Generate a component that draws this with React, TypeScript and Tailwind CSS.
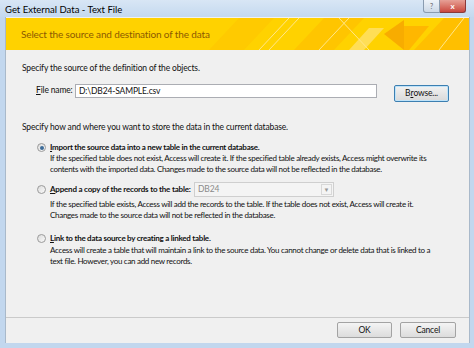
import React from "react";

const font = { fontFamily: 'Lato, "Liberation Sans", sans-serif' };

function Radio({ checked }: { checked?: boolean }) {
  return (
    <span className="inline-flex h-[9px] w-[9px] shrink-0 items-center justify-center rounded-full border border-[#9a9a9a] bg-gradient-to-br from-[#dcdcdc] to-[#fafafa]">
      {checked && <span className="h-[4px] w-[4px] rounded-full bg-[#3d6c99]" />}
    </span>
  );
}

export default function App() {
  return (
    <div className="h-[348px] w-[474px] overflow-hidden bg-[#c2d7ee] text-[8.5px] leading-[11px] tracking-[-0.15px] text-[#111]" style={font}>
      <div className="flex h-[17px] items-start bg-gradient-to-b from-[#d8e6f5] to-[#c4d9ef]">
        <div className="pl-[5px] pt-[4px] text-[9.5px] leading-[11px] tracking-normal text-black">Get External Data - Text File</div>
        <div className="flex-1" />
        <div className="mr-[8px] flex">
          <div className="flex h-[13px] w-[17px] items-center justify-center rounded-bl-[3px] border border-t-0 border-[#8a9cb0] bg-gradient-to-b from-[#eef3f9] to-[#ccd8e6] text-[7px] text-[#666]">?</div>
          <div className="flex h-[13px] w-[26px] items-center justify-center rounded-br-[3px] border border-l-0 border-t-0 border-[#8a3a3a] bg-gradient-to-b from-[#e6a096] to-[#c9463e] text-[8px] font-bold text-white">x</div>
        </div>
      </div>
      <div className="ml-[5px] flex h-[326px] w-[465px] flex-col border-x border-[#a9b9ca] bg-[#f0f0f0]">
        <div className="relative mt-[1px] flex h-[32px] items-center overflow-hidden bg-[#ffd200] pl-[15px]">
          <svg className="absolute right-0 top-0" width="270" height="32" viewBox="0 0 270 32">
            <polygon points="10,32 40,0 75,0 45,32" fill="#ffc600" opacity="0.7" />
            <polygon points="95,32 125,0 165,0 135,32" fill="#ffbd00" opacity="0.6" />
            <polygon points="150,32 170,10 185,10 165,32" fill="#ffe27a" opacity="0.7" />
            <polygon points="185,16 205,2 205,32" fill="#f59b00" opacity="0.7" />
            <polygon points="205,8 230,8 210,32 205,32" fill="#ffab00" opacity="0.7" />
            <polygon points="215,32 245,0 270,0 270,32" fill="#ffb300" opacity="0.6" />
            <line x1="60" y1="32" x2="90" y2="0" stroke="#ffe68a" strokeWidth="1" />
            <line x1="70" y1="32" x2="100" y2="0" stroke="#ffe68a" strokeWidth="1" />
            <line x1="120" y1="32" x2="150" y2="0" stroke="#ffe68a" strokeWidth="1" />
            <line x1="140" y1="0" x2="170" y2="32" stroke="#ffe68a" strokeWidth="1" />
            <line x1="240" y1="32" x2="265" y2="0" stroke="#ffe68a" strokeWidth="1" />
          </svg>
          <span className="relative text-[10px] tracking-[-0.15px] text-[#8c5a00]">Select the source and destination of the data</span>
        </div>
        <div className="flex-1 pl-[16px] pt-[13px]">
          <div className="whitespace-nowrap">Specify the source of the definition of the objects.</div>
          <div className="mt-[10px] flex items-start">
            <span className="ml-[14px] mt-[1px] w-[39px] whitespace-nowrap"><u>F</u>ile name:</span>
            <div className="flex h-[14px] w-[302px] items-center border border-[#abadb3] bg-white pl-[3px]">D:\DB24-SAMPLE.csv</div>
            <div className="ml-[17px] mt-[1px] flex h-[17px] w-[55px] items-center justify-center rounded-[2px] border border-[#3c7fb1] bg-gradient-to-b from-[#f2f2f2] to-[#d9d9d9] shadow-[inset_0_0_0_1px_#bfe3f9]">B<u>r</u>owse...</div>
          </div>
          <div className="mt-[20px] whitespace-nowrap">Specify how and where you want to store the data in the current database.</div>
          <div className="ml-[15px] mt-[9px] whitespace-nowrap">
            <div className="flex items-center">
              <Radio checked />
              <span className="ml-[4px] text-[8px] font-bold tracking-[-0.25px]"><u>I</u>mport the source data into a new table in the current database.</span>
            </div>
            <div className="ml-[13px] text-[8px] tracking-[-0.3px]">
              If the specified table does not exist, Access will create it. If the specified table already exists, Access might overwrite its<br />
              contents with the imported data. Changes made to the source data will not be reflected in the database.
            </div>
            <div className="mt-[7px] flex items-center">
              <Radio />
              <span className="ml-[4px] w-[144px] text-[8px] font-bold tracking-[-0.2px]"><u>A</u>ppend a copy of the records to the table:</span>
              <div className="flex h-[15px] w-[140px] items-center justify-between border border-[#cfcfcf] bg-[#f4f4f4] pl-[3px] text-[#8a8a8a]">
                <span>DB24</span>
                <span className="mr-[1px] flex h-[11px] w-[11px] items-center justify-center border border-[#d8d8d8] text-[6px] text-[#999]">▼</span>
              </div>
            </div>
            <div className="ml-[13px] mt-[2px] text-[8px] tracking-[-0.3px]">
              If the specified table exists, Access will add the records to the table. If the table does not exist, Access will create it.<br />
              Changes made to the source data will not be reflected in the database.
            </div>
            <div className="mt-[12px] flex items-center">
              <Radio />
              <span className="ml-[4px] text-[8px] font-bold tracking-[-0.25px]"><u>L</u>ink to the data source by creating a linked table.</span>
            </div>
            <div className="ml-[13px] mt-[1px] text-[8px] tracking-[-0.3px]">
              Access will create a table that will maintain a link to the source data. You cannot change or delete data that is linked to a<br />
              text file. However, you can add new records.
            </div>
          </div>
        </div>
        <div className="h-[1px] bg-[#cacaca]" />
        <div className="flex h-[25px] items-start justify-end pr-[13px] pt-[4px]">
          <div className="flex h-[16px] w-[55px] items-center justify-center rounded-[2px] border border-[#a3a3a3] bg-gradient-to-b from-[#f4f4f4] to-[#dcdcdc]">OK</div>
          <div className="ml-[8px] flex h-[16px] w-[56px] items-center justify-center rounded-[2px] border border-[#a3a3a3] bg-gradient-to-b from-[#f4f4f4] to-[#dcdcdc]">Cancel</div>
        </div>
      </div>
    </div>
  );
}
